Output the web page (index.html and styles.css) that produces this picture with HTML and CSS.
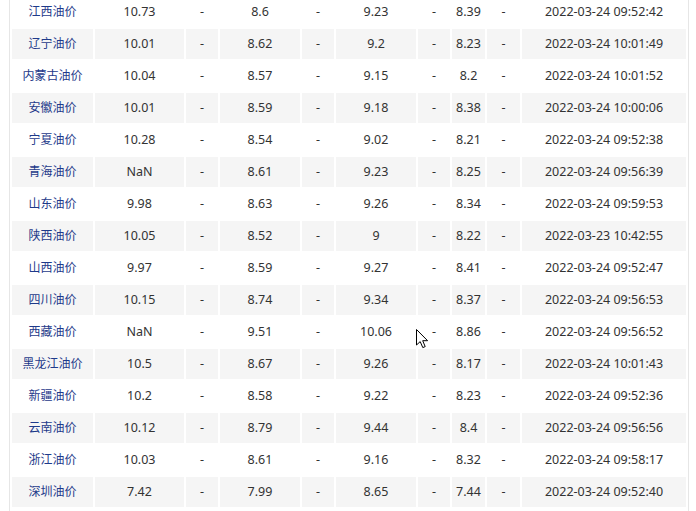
FILE: index.html
```html
<!DOCTYPE html>
<html lang="zh-CN">
<head>
    <meta charset="UTF-8">
    <meta name="viewport" content="width=device-width, initial-scale=1.0">
    <title>各地油价</title>
    <link rel="stylesheet" href="styles.css">
</head>
<body>
    <div class="price-box">
        <table class="price-table">
            <colgroup>
                <col class="c-name"><col class="c-92"><col class="c-dash"><col class="c-95">
                <col class="c-dash"><col class="c-98"><col class="c-dash"><col class="c-0">
                <col class="c-dash2"><col class="c-time">
            </colgroup>
            <tbody id="priceBody"></tbody>
        </table>
        <svg class="cursor" width="13" height="20" viewBox="0 0 13 20">
            <path d="M0.5 0.5 L0.5 16 L4.2 12.6 L6.8 18.6 L9.2 17.6 L6.7 11.7 L11.6 11.7 Z" fill="#fff" stroke="#000" stroke-width="1" stroke-linejoin="miter"/>
        </svg>
    </div>

    <script>
        const rows = [
            ['江西油价', '10.73', '8.6', '9.23', '8.39', '2022-03-24 09:52:42'],
            ['辽宁油价', '10.01', '8.62', '9.2', '8.23', '2022-03-24 10:01:49'],
            ['内蒙古油价', '10.04', '8.57', '9.15', '8.2', '2022-03-24 10:01:52'],
            ['安徽油价', '10.01', '8.59', '9.18', '8.38', '2022-03-24 10:00:06'],
            ['宁夏油价', '10.28', '8.54', '9.02', '8.21', '2022-03-24 09:52:38'],
            ['青海油价', 'NaN', '8.61', '9.23', '8.25', '2022-03-24 09:56:39'],
            ['山东油价', '9.98', '8.63', '9.26', '8.34', '2022-03-24 09:59:53'],
            ['陕西油价', '10.05', '8.52', '9', '8.22', '2022-03-23 10:42:55'],
            ['山西油价', '9.97', '8.59', '9.27', '8.41', '2022-03-24 09:52:47'],
            ['四川油价', '10.15', '8.74', '9.34', '8.37', '2022-03-24 09:56:53'],
            ['西藏油价', 'NaN', '9.51', '10.06', '8.86', '2022-03-24 09:56:52'],
            ['黑龙江油价', '10.5', '8.67', '9.26', '8.17', '2022-03-24 10:01:43'],
            ['新疆油价', '10.2', '8.58', '9.22', '8.23', '2022-03-24 09:52:36'],
            ['云南油价', '10.12', '8.79', '9.44', '8.4', '2022-03-24 09:56:56'],
            ['浙江油价', '10.03', '8.61', '9.16', '8.32', '2022-03-24 09:58:17'],
            ['深圳油价', '7.42', '7.99', '8.65', '7.44', '2022-03-24 09:52:40']
        ];

        const body = document.getElementById('priceBody');
        rows.forEach(function (r) {
            const tr = document.createElement('tr');
            const cells = [r[0], r[1], '-', r[2], '-', r[3], '-', r[4], '-', r[5]];
            cells.forEach(function (text, i) {
                const td = document.createElement('td');
                td.textContent = text;
                if (i === 0) td.className = 'name';
                tr.appendChild(td);
            });
            body.appendChild(tr);
        });
    </script>
</body>
</html>
```

FILE: styles.css
```css
body {
    margin: 0;
    font-family: "Noto Sans", "Noto Sans CJK SC", sans-serif;
    font-size: 12.5px;
    color: #333;
    background: #fff;
}
.price-box {
    position: relative;
    width: 678px;
    margin-left: 9px;
    border-left: 1px solid #e6e6e6;
    border-right: 1px solid #e6e6e6;
    height: 520px;
    overflow: hidden;
}
.price-table {
    width: 678px;
    margin-top: -5px;
    border-collapse: separate;
    border-spacing: 2px;
    table-layout: fixed;
}
.c-name { width: 81px; }
.c-92 { width: 89px; }
.c-dash { width: 32px; }
.c-95 { width: 80px; }
.c-98 { width: 80px; }
.c-0 { width: 33px; }
.c-dash2 { width: 33px; }
.c-time { width: 164px; }
.price-table td {
    height: 30px;
    padding: 0;
    text-align: center;
    vertical-align: middle;
    white-space: nowrap;
    line-height: 30px;
}
.price-table tr:nth-child(even) td {
    background-color: #f5f5f5;
}
.price-table td.name {
    color: #1e3a8a;
    font-size: 12px;
}
.cursor {
    position: absolute;
    left: 406px;
    top: 329px;
}
```
